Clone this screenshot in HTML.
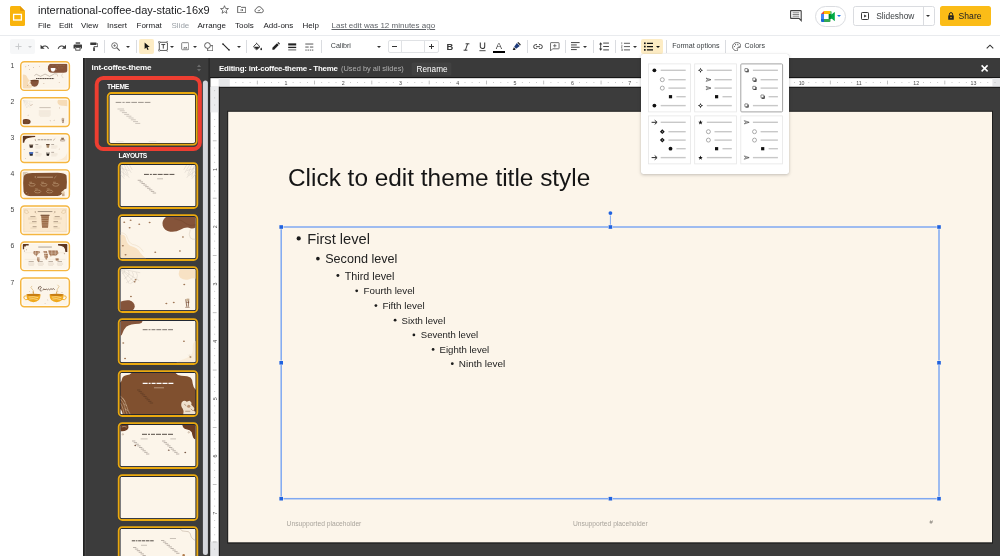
<!DOCTYPE html>
<html><head><meta charset="utf-8">
<style>
*{box-sizing:border-box;margin:0;padding:0}
html,body{width:1000px;height:556px;overflow:hidden;background:#fff;font-family:"Liberation Sans",sans-serif;}
.abs{position:absolute}
#root{position:relative;width:1000px;height:556px;overflow:hidden;background:#fff;-webkit-font-smoothing:antialiased}
.t,svg.ic{will-change:opacity}
.t{position:absolute;white-space:nowrap;line-height:1}
.menu{font-size:8px;color:#202124;top:22px}
.sep{position:absolute;top:40px;width:1px;height:13px;background:#dadce0}
.ic{position:absolute}
.caret{position:absolute;width:0;height:0;border-left:2.5px solid transparent;border-right:2.5px solid transparent;border-top:2.5px solid #333;top:46px}
.dark{background:#3c3c3c}
.fth{position:absolute;left:20px;width:49.8px;height:29.6px;border:1.6px solid #f3b337;border-radius:4px;background:#fffaf0;padding:.7px;overflow:hidden}
.fnum{position:absolute;left:9.3px;font-size:6.8px;color:#444;width:6px;text-align:center}
.lth{position:absolute;left:117.8px;width:80.4px;height:46.6px;border:1.8px solid #eaa90f;border-radius:4px;background:#2b2b2b;padding:.7px;overflow:hidden}
.lth>svg,.lth>div{display:block;width:100%;height:100%;border-radius:2px;background:#fcf5ea}
</style></head><body><div id="root">

<!-- ===== HEADER ===== -->
<svg class="abs" style="left:10px;top:6px" width="15" height="20" viewBox="0 0 15 20">
<path d="M1.5 0H10L15 5V18.5Q15 20 13.5 20H1.5Q0 20 0 18.5V1.5Q0 0 1.5 0Z" fill="#f9b40c"/>
<path d="M10 0L15 5H11.2Q10 5 10 3.8Z" fill="#e59a06"/>
<rect x="3.6" y="8.4" width="7.8" height="5.6" fill="none" stroke="#fff" stroke-width="1.3"/>
</svg>
<div class="t" id="doctitle" style="left:38px;top:5px;font-size:11px;color:#202124">international-coffee-day-static-16x9</div>
<div class="t menu" style="left:38px">File</div>
<div class="t menu" style="left:59px">Edit</div>
<div class="t menu" style="left:81px">View</div>
<div class="t menu" style="left:107px">Insert</div>
<div class="t menu" style="left:136.5px">Format</div>
<div class="t menu" style="left:171.5px;color:#9aa0a6">Slide</div>
<div class="t menu" style="left:197.5px">Arrange</div>
<div class="t menu" style="left:235px">Tools</div>
<div class="t menu" style="left:263.5px">Add-ons</div>
<div class="t menu" style="left:302.5px">Help</div>
<div class="t menu" style="left:331.5px;color:#5f6368;text-decoration:underline" id="lastedit">Last edit was 12 minutes ago</div>

<!-- star/move/cloud icons -->
<svg class="ic" style="left:219.9px;top:5.4px" width="9" height="9" viewBox="0 0 10 10"><path d="M5 0.8L6.2 3.8L9.4 4L6.9 6.1L7.7 9.2L5 7.5L2.3 9.2L3.1 6.1L0.6 4L3.8 3.8Z" fill="none" stroke="#444" stroke-width="0.8"/></svg>
<svg class="ic" style="left:236.8px;top:6.2px" width="9.4" height="7.2" viewBox="0 0 10 8"><path d="M0.5 0.5H3.6L4.6 1.5H9.5V7.5H0.5Z" fill="none" stroke="#444" stroke-width="0.9"/><path d="M3.4 4.5H6.2M5.2 3.3L6.4 4.5L5.2 5.7" stroke="#444" stroke-width="0.8" fill="none"/></svg>
<svg class="ic" style="left:254px;top:6.4px" width="10.2" height="7.2" viewBox="0 0 11 8"><path d="M2.8 7.4A2.3 2.3 0 0 1 2.6 2.9A3 3 0 0 1 8.4 2.9A2.3 2.3 0 0 1 8.4 7.4Z" fill="none" stroke="#444" stroke-width="0.9"/><path d="M4.2 4.6L5.2 5.6L7 3.9" stroke="#444" stroke-width="0.8" fill="none"/></svg>
<!-- comments icon -->
<svg class="ic" style="left:790px;top:10px" width="12.5" height="12" viewBox="0 0 12.5 12"><path d="M1.2 0.6H10.6Q11.2 0.6 11.2 1.2V10.6L9 8.4H1.2Q0.6 8.4 0.6 7.8V1.2Q0.6 0.6 1.2 0.6Z" fill="none" stroke="#444" stroke-width="1.1"/><path d="M2.6 2.8H9.2M2.6 4.5H9.2M2.6 6.2H9.2" stroke="#666" stroke-width="0.8"/></svg>
<!-- meet -->
<div class="abs" style="left:814.8px;top:5.5px;width:30.8px;height:21px;border:1px solid #dadce0;border-radius:10.5px"></div>
<svg class="ic" style="left:820.5px;top:10.5px" width="14" height="11" viewBox="0 0 14 11"><path d="M0 3L3 0V3Z" fill="#ea4335"/><rect x="3" y="0" width="6.5" height="3" fill="#fbbc04"/><rect x="0" y="3" width="3" height="5" fill="#4285f4"/><path d="M0 8H3V11H1Q0 11 0 10Z" fill="#1967d2"/><path d="M3 8H9.5V10Q9.5 11 8.5 11H3Z" fill="#34a853"/><path d="M9.5 0Q10.5 0 10.5 1V3.4L13.2 1.2Q13.8 0.8 13.8 1.6V9.4Q13.8 10.2 13.2 9.8L10.5 7.6V8H7.5V3H9.5Z" fill="#00ac47"/><path d="M7.5 3H9.5V5.5L10.5 4.6V6.4L9.5 5.5V8H7.5Z" fill="#00832d"/><rect x="3" y="3" width="4.5" height="5" fill="#fff"/></svg>
<div class="caret" style="left:837.2px;top:14.6px;border-top-color:#1a73e8;border-left-width:2.2px;border-right-width:2.2px;border-top-width:2.4px"></div>
<!-- slideshow -->
<div class="abs" style="left:853px;top:6px;width:81.6px;height:20.4px;border:1px solid #dadce0;border-radius:2.5px"></div>
<div class="abs" style="left:922.8px;top:6px;width:1px;height:20.4px;background:#dadce0"></div>
<svg class="ic" style="left:860.7px;top:12px" width="8" height="8" viewBox="0 0 8 8"><rect x="0.5" y="0.5" width="7" height="7" rx="0.8" fill="none" stroke="#222" stroke-width="0.9"/><path d="M3.2 2.4V5.6L5.6 4Z" fill="#222"/></svg>
<div class="t" id="sshow" style="left:876.2px;top:11.6px;font-size:8.4px;color:#3c4043">Slideshow</div>
<div class="caret" style="left:926.3px;top:15px;border-top-color:#333"></div>
<!-- share -->
<div class="abs" style="left:940px;top:6px;width:51.2px;height:20px;background:#fbbc17;border-radius:2.5px"></div>
<svg class="ic" style="left:947.8px;top:11.5px" width="6" height="8" viewBox="0 0 6 8"><rect x="0.2" y="3.2" width="5.6" height="4.6" rx="0.6" fill="#202124"/><path d="M1.4 3.4V2.2A1.6 1.6 0 0 1 4.6 2.2V3.4" fill="none" stroke="#202124" stroke-width="1"/><circle cx="3" cy="5.5" r="0.7" fill="#fbbc17"/></svg>
<div class="t" id="share" style="left:958.6px;top:11.6px;font-size:8.6px;color:#202124">Share</div>
<div class="abs" style="left:0;top:35px;width:1000px;height:1px;background:#e9ebee"></div>

<!-- ===== TOOLBAR placeholder ===== -->
<div id="toolbar">
<div class="abs" style="left:10px;top:39px;width:24.8px;height:14.8px;background:#f6f7f8;border-radius:2px"></div>
<svg class="ic" style="left:14.50px;top:43.00px" width="7" height="7" viewBox="0 0 8 8"><path d="M4 0.5V7.5M0.5 4H7.5" stroke="#c8cacc" stroke-width="1.1"/></svg>
<div class="abs" style="left:27.70px;top:45.55px;width:0;height:0;border-left:2.3px solid transparent;border-right:2.3px solid transparent;border-top:2.5px solid #c8cacc"></div>
<svg class="ic" style="left:40.20px;top:42.70px" width="9.6" height="7.6" viewBox="0 0 11 9"><path d="M2.6 4.8C4.6 2.6 8.4 3 9.9 6.8" fill="none" stroke="#3a3a3a" stroke-width="1.25"/><path d="M0.5 2V6.8H5.3Z" fill="#3a3a3a"/></svg>
<svg class="ic" style="left:56.80px;top:42.70px" width="9.6" height="7.6" viewBox="0 0 11 9"><path d="M8.4 4.8C6.4 2.6 2.6 3 1.1 6.8" fill="none" stroke="#3a3a3a" stroke-width="1.25"/><path d="M10.5 2V6.8H5.7Z" fill="#3a3a3a"/></svg>
<svg class="ic" style="left:72.70px;top:42.20px" width="9.8" height="8.6" viewBox="0 0 11 10"><rect x="2.9" y="0.4" width="5.2" height="1.6" fill="#3a3a3a"/><path d="M1.6 3H9.4Q10.6 3 10.6 4.2V7.6H8.7V5.9H2.3V7.6H0.4V4.2Q0.4 3 1.6 3Z" fill="#3a3a3a"/><rect x="3" y="6.5" width="5" height="3" fill="#fff" stroke="#3a3a3a" stroke-width="1"/></svg>
<svg class="ic" style="left:90.00px;top:41.70px" width="8.4" height="9.6" viewBox="0 0 10 11"><rect x="0.3" y="0.4" width="7.4" height="2.9" rx="0.4" fill="#3a3a3a"/><path d="M7.7 1.9H9.3V5.3H4.8V6.6" fill="none" stroke="#3a3a3a" stroke-width="1"/><rect x="3.8" y="6.4" width="2" height="4.2" fill="#3a3a3a"/></svg>
<div class="sep" style="left:103.8px"></div>
<svg class="ic" style="left:110.90px;top:42.00px" width="9.4" height="9.4" viewBox="0 0 11 11"><circle cx="4.2" cy="4.2" r="3.4" fill="none" stroke="#555" stroke-width="0.95"/><path d="M6.7 6.7L10.2 10.2" stroke="#555" stroke-width="1.25"/><path d="M4.2 2.6V5.8M2.6 4.2H5.8" stroke="#555" stroke-width="0.75"/></svg>
<div class="abs" style="left:126.20px;top:45.55px;width:0;height:0;border-left:2.3px solid transparent;border-right:2.3px solid transparent;border-top:2.5px solid #333"></div>
<div class="sep" style="left:136.3px"></div>
<div class="abs" style="left:139.3px;top:39.3px;width:15px;height:14.4px;background:#fdecc4;border-radius:2px"></div>
<svg class="ic" style="left:143.80px;top:42.30px" width="6.2" height="8.8" viewBox="0 0 8 11"><path d="M0.8 0.4V8.8L3 6.8L4.5 10.3L6 9.6L4.5 6.2H7.4Z" fill="#151515"/></svg>
<svg class="ic" style="left:157.50px;top:41.20px" width="10.6" height="10.6" viewBox="0 0 12 12"><rect x="1.4" y="1.4" width="9.2" height="9.2" fill="none" stroke="#3a3a3a" stroke-width="0.9"/><circle cx="1.4" cy="1.4" r="1" fill="#fff" stroke="#3a3a3a" stroke-width="0.6"/><circle cx="10.6" cy="1.4" r="1" fill="#fff" stroke="#3a3a3a" stroke-width="0.6"/><circle cx="1.4" cy="10.6" r="1" fill="#fff" stroke="#3a3a3a" stroke-width="0.6"/><circle cx="10.6" cy="10.6" r="1" fill="#fff" stroke="#3a3a3a" stroke-width="0.6"/><path d="M3.8 4H8.2M6 4V8.6" stroke="#3a3a3a" stroke-width="1.05" fill="none"/></svg>
<div class="abs" style="left:170.10px;top:45.55px;width:0;height:0;border-left:2.3px solid transparent;border-right:2.3px solid transparent;border-top:2.5px solid #333"></div>
<svg class="ic" style="left:180.70px;top:42.30px" width="8.4" height="8.4" viewBox="0 0 10 10"><rect x="0.8" y="0.8" width="8.4" height="8.4" rx="0.9" fill="none" stroke="#666" stroke-width="0.95"/><path d="M2.4 7.6L4 5.9L5.2 7L6.4 5.7L7.8 7.6Z" fill="#666"/></svg>
<div class="abs" style="left:192.50px;top:45.55px;width:0;height:0;border-left:2.3px solid transparent;border-right:2.3px solid transparent;border-top:2.5px solid #333"></div>
<svg class="ic" style="left:203.60px;top:41.70px" width="9.6" height="9.6" viewBox="0 0 11 11"><circle cx="4" cy="4" r="3.3" fill="none" stroke="#3a3a3a" stroke-width="0.95"/><path d="M7.6 4.2H10.2V10.2H4.2V7.6" fill="none" stroke="#3a3a3a" stroke-width="0.95"/></svg>
<svg class="ic" style="left:222.00px;top:42.50px" width="8" height="8" viewBox="0 0 9 9"><path d="M1 1L8 8" stroke="#222" stroke-width="1.15"/><circle cx="1" cy="1" r="0.85" fill="#222"/><circle cx="8" cy="8" r="0.85" fill="#222"/></svg>
<div class="abs" style="left:236.50px;top:45.55px;width:0;height:0;border-left:2.3px solid transparent;border-right:2.3px solid transparent;border-top:2.5px solid #333"></div>
<div class="sep" style="left:246.0px"></div>
<svg class="ic" style="left:252.60px;top:41.90px" width="9.6" height="8.8" viewBox="0 0 11 10"><path d="M3.4 0.8L8 5.4L4.7 8.5Q4.1 9 3.5 8.5L1 6Q0.5 5.4 1 4.8L4.2 1.6" fill="none" stroke="#222" stroke-width="0.95"/><path d="M1.2 5.4H7.8L4.4 8.6Z" fill="#222"/><path d="M9.4 6.2Q10.6 7.8 10.4 8.4A1 1 0 0 1 8.4 8.4Q8.2 7.8 9.4 6.2Z" fill="#222"/></svg>
<svg class="ic" style="left:271.60px;top:42.20px" width="8" height="8" viewBox="0 0 9 9"><path d="M0.4 8.6V6.6L5.6 1.4L7.6 3.4L2.4 8.6Z" fill="#222"/><path d="M6.2 0.8L6.8 0.2Q7.1 0 7.4 0.2L8.8 1.6Q9 1.9 8.8 2.2L8.2 2.8Z" fill="#222"/></svg>
<svg class="ic" style="left:288.20px;top:42.50px" width="8.4" height="8" viewBox="0 0 9 9"><rect x="0" y="0.4" width="9" height="2.4" fill="#222"/><rect x="0" y="4.2" width="9" height="1.5" fill="#222"/><rect x="0" y="7.4" width="9" height="0.8" fill="#222"/></svg>
<svg class="ic" style="left:305.20px;top:42.50px" width="8.6" height="8" viewBox="0 0 9 9"><rect x="0" y="0.6" width="9" height="1.1" fill="#555"/><rect x="0" y="4" width="3.8" height="1.1" fill="#555"/><rect x="5.2" y="4" width="3.8" height="1.1" fill="#555"/><rect x="0" y="7.4" width="1.6" height="1.1" fill="#555"/><rect x="2.5" y="7.4" width="1.6" height="1.1" fill="#555"/><rect x="5" y="7.4" width="1.6" height="1.1" fill="#555"/><rect x="7.4" y="7.4" width="1.6" height="1.1" fill="#555"/></svg>
<div class="sep" style="left:321.0px"></div>
<div class="t" id="calibri" style="left:330.8px;top:43.2px;font-size:7.1px;color:#3c4043">Calibri</div>
<div class="abs" style="left:377.00px;top:45.55px;width:0;height:0;border-left:2.3px solid transparent;border-right:2.3px solid transparent;border-top:2.5px solid #333"></div>
<div class="abs" style="left:387.6px;top:39.6px;width:51.2px;height:13.8px;border:1px solid #e0e2e5;border-radius:2px"></div>
<div class="abs" style="left:401.2px;top:39.6px;width:1px;height:13.8px;background:#e0e2e5"></div>
<div class="abs" style="left:424.4px;top:39.6px;width:1px;height:13.8px;background:#e0e2e5"></div>
<div class="abs" style="left:392.4px;top:46.1px;width:4.8px;height:1px;background:#333"></div>
<div class="abs" style="left:429.1px;top:46.1px;width:5px;height:1px;background:#333"></div>
<div class="abs" style="left:431.1px;top:44.1px;width:1px;height:5px;background:#333"></div>
<div class="t" style="left:446.4px;top:42px;font-size:9.4px;font-weight:bold;color:#3a3a3a">B</div>
<svg class="ic" style="left:462.50px;top:42.50px" width="7" height="8" viewBox="0 0 7 8"><path d="M2.6 0.8H6.4M0.6 7.2H4.4M4.6 0.8L2.4 7.2" stroke="#3a3a3a" stroke-width="1" fill="none"/></svg>
<svg class="ic" style="left:478.80px;top:42.30px" width="7" height="9.4" viewBox="0 0 7 9.4"><path d="M1.3 0.4V4.4A2.2 2.2 0 0 0 5.7 4.4V0.4" stroke="#3a3a3a" stroke-width="1.05" fill="none"/><path d="M0.4 8.7H6.6" stroke="#3a3a3a" stroke-width="0.9"/></svg>
<div class="t" style="left:495.8px;top:41.2px;font-size:9.4px;color:#3a3a3a">A</div>
<div class="abs" style="left:493px;top:51.2px;width:12px;height:1.7px;background:#000"></div>
<svg class="ic" style="left:512.10px;top:41.60px" width="9" height="9" viewBox="0 0 10 10"><path d="M5.4 1.2L8.6 4.4L4.6 7.6L2.4 5.4Z" fill="#1c3a7a"/><path d="M2 5.8L4.2 8L3.2 8.8H0.8Z" fill="#222"/><path d="M6 0.8L7 0L9.8 2.8L9 3.8Z" fill="#222"/></svg>
<div class="sep" style="left:527.1px"></div>
<svg class="ic" style="left:533.00px;top:43.80px" width="10" height="5.4" viewBox="0 0 11 6"><path d="M4.4 0.7H3A2.3 2.3 0 0 0 3 5.3H4.4M6.6 0.7H8A2.3 2.3 0 0 1 8 5.3H6.6M3.4 3H7.6" fill="none" stroke="#3a3a3a" stroke-width="1.1"/></svg>
<svg class="ic" style="left:550.00px;top:42.00px" width="9.6" height="9.6" viewBox="0 0 11 11"><path d="M1.2 0.7H9.8Q10.4 0.7 10.4 1.3V7.2Q10.4 7.8 9.8 7.8H3L0.6 10.2V1.3Q0.6 0.7 1.2 0.7Z" fill="none" stroke="#555" stroke-width="0.95"/><path d="M5.5 2.4V6.2M3.6 4.3H7.4" stroke="#555" stroke-width="0.95"/></svg>
<div class="sep" style="left:564.9px"></div>
<svg class="ic" style="left:570.80px;top:42.40px" width="9" height="8.2" viewBox="0 0 10 9"><path d="M0 0.6H9.6M0 3.2H6.4M0 5.8H9.6M0 8.4H6.4" stroke="#3a3a3a" stroke-width="1.05"/></svg>
<div class="abs" style="left:582.90px;top:45.55px;width:0;height:0;border-left:2.3px solid transparent;border-right:2.3px solid transparent;border-top:2.5px solid #333"></div>
<div class="sep" style="left:592.7px"></div>
<svg class="ic" style="left:599.40px;top:42.00px" width="10" height="9" viewBox="0 0 11 10"><path d="M4.6 1.2H11M4.6 5H11M4.6 8.8H11" stroke="#3a3a3a" stroke-width="1.05"/><path d="M1.8 1.6V8.4" stroke="#3a3a3a" stroke-width="1"/><path d="M0 2.8L1.8 0.4L3.6 2.8ZM0 7.2L1.8 9.6L3.6 7.2Z" fill="#3a3a3a"/></svg>
<div class="sep" style="left:615.1px"></div>
<svg class="ic" style="left:620.90px;top:41.90px" width="9.2" height="9.2" viewBox="0 0 10 10"><path d="M3.2 1.4H10M3.2 5H10M3.2 8.6H10" stroke="#555" stroke-width="1.05"/><path d="M0.8 0.2V2.6M0.2 4H1.4L0.2 6H1.4M0.2 7.4H1.4V9.8H0.2M0.6 8.6H1.4" stroke="#555" stroke-width="0.6" fill="none"/></svg>
<div class="abs" style="left:633.30px;top:45.55px;width:0;height:0;border-left:2.3px solid transparent;border-right:2.3px solid transparent;border-top:2.5px solid #333"></div>
<div class="abs" style="left:641.2px;top:38.8px;width:22.2px;height:15px;background:#fdecc4;border-radius:2px"></div>
<svg class="ic" style="left:644.00px;top:41.90px" width="9.2" height="9.2" viewBox="0 0 10 10"><path d="M3.2 1.4H10M3.2 5H10M3.2 8.6H10" stroke="#111" stroke-width="1.3"/><rect x="0" y="0.5" width="1.8" height="1.8" fill="#111"/><rect x="0" y="4.1" width="1.8" height="1.8" fill="#111"/><rect x="0" y="7.7" width="1.8" height="1.8" fill="#111"/></svg>
<div class="abs" style="left:656.20px;top:45.55px;width:0;height:0;border-left:2.3px solid transparent;border-right:2.3px solid transparent;border-top:2.5px solid #111"></div>
<div class="sep" style="left:665.5px"></div>
<div class="t" id="fmtopt" style="left:672.2px;top:43.4px;font-size:7.1px;color:#3c4043">Format options</div>
<div class="sep" style="left:725.1px"></div>
<svg class="ic" style="left:731.80px;top:41.80px" width="9.4" height="9.4" viewBox="0 0 10 10"><path d="M5 0.6A4.4 4.4 0 1 0 5 9.4Q6 9.4 6 8.5Q6 8 5.7 7.7Q5.4 7.3 5.4 6.9Q5.4 6 6.4 6H7.6Q9.4 6 9.4 4.4Q9.4 0.6 5 0.6Z" fill="none" stroke="#555" stroke-width="0.9"/><circle cx="2.6" cy="4.8" r="0.6" fill="#555"/><circle cx="3.8" cy="2.8" r="0.6" fill="#555"/><circle cx="6.2" cy="2.8" r="0.6" fill="#555"/><circle cx="7.6" cy="4.6" r="0.6" fill="#555"/></svg>
<div class="t" id="colors" style="left:744.5px;top:43.4px;font-size:7.1px;color:#3c4043">Colors</div>
<svg class="ic" style="left:986.00px;top:44.10px" width="8" height="5.4" viewBox="0 0 9 6"><path d="M0.8 5L4.5 1.3L8.2 5" fill="none" stroke="#333" stroke-width="1.2"/></svg>
</div>


<!-- ===== FILMSTRIP ===== -->
<div id="film">
<div class="fnum t" style="top:63.2px">1</div>
<div class="fnum t" style="top:99.2px">2</div>
<div class="fnum t" style="top:135.3px">3</div>
<div class="fnum t" style="top:171.3px">4</div>
<div class="fnum t" style="top:207.4px">5</div>
<div class="fnum t" style="top:243.4px">6</div>
<div class="fnum t" style="top:279.5px">7</div>
<svg class="ic" style="left:0;top:0" width="90" height="556" viewBox="0 0 90 556"><defs><clipPath id="fc0"><rect x="22.45" y="63.45" width="45.20" height="25.20" rx="1.6"/></clipPath><clipPath id="fc1"><rect x="22.45" y="99.50" width="45.20" height="25.20" rx="1.6"/></clipPath><clipPath id="fc2"><rect x="22.45" y="135.55" width="45.20" height="25.20" rx="1.6"/></clipPath><clipPath id="fc3"><rect x="22.45" y="171.60" width="45.20" height="25.20" rx="1.6"/></clipPath><clipPath id="fc4"><rect x="22.45" y="207.65" width="45.20" height="25.20" rx="1.6"/></clipPath><clipPath id="fc5"><rect x="22.45" y="243.70" width="45.20" height="25.20" rx="1.6"/></clipPath><clipPath id="fc6"><rect x="22.45" y="279.75" width="45.20" height="25.20" rx="1.6"/></clipPath></defs><rect x="20.73" y="61.73" width="48.65" height="28.65" rx="3.6" fill="#fffaf2" stroke="#f5b640" stroke-width="1.45"/><g clip-path="url(#fc0)"><svg x="22.45" y="63.45" width="45.20" height="25.20" viewBox="0 0 160 90" preserveAspectRatio="none"><rect width="160" height="90" fill="#fcf5ea"/>
<path d="M0 40Q14 38 18 52Q22 62 34 66Q40 80 28 90H0Z" fill="#f6dcb8"/>
<path d="M98 0H160V24Q158 33 146 33H106Q90 33 90 18Q90 6 98 0Z" fill="#85533a"/>
<path d="M100 16H116Q116 29 108 29Q100 29 100 16Z" fill="#fff"/><path d="M116 18Q121 18 118 24" stroke="#fff" fill="none" stroke-width="1.5"/>
<path d="M106 8H112M118 8H150M126 16H148" stroke="#b8905c" stroke-width="1.3" stroke-dasharray="3 2"/>
<path d="M28 61H58Q58 83 43 83Q28 83 28 61Z" fill="#85533a"/><path d="M29 65Q19 63 22 72Q25 78 32 76" fill="none" stroke="#fff" stroke-width="2.5"/><ellipse cx="43" cy="61" rx="15" ry="2.6" fill="#6e422a"/>
<path d="M42 44Q48 34 56 42T72 42T88 42T104 42T124 38" stroke="#8a7a6c" stroke-width="1.5" fill="none"/>
<path d="M48 54H112" stroke="#2a1c14" stroke-width="3" stroke-dasharray="5 1.2"/>
<path d="M142 36Q134 44 144 52" stroke="#c9b9a4" stroke-width="1.5" fill="none"/>
<circle cx="12" cy="12" r="1.3" fill="#8a5a3a"/><circle cx="24" cy="22" r="1.3" fill="#8a5a3a"/><circle cx="40" cy="14" r="1.3" fill="#8a5a3a"/><circle cx="60" cy="10" r="1.3" fill="#8a5a3a"/><circle cx="22" cy="8" r="1.3" fill="#8a5a3a"/><circle cx="124" cy="44" r="1.3" fill="#8a5a3a"/><circle cx="130" cy="68" r="1.3" fill="#8a5a3a"/><circle cx="76" cy="72" r="1.3" fill="#8a5a3a"/><circle cx="18" cy="78" r="1.3" fill="#8a5a3a"/></svg></g><rect x="20.73" y="97.77" width="48.65" height="28.65" rx="3.6" fill="#fffaf2" stroke="#f5b640" stroke-width="1.45"/><g clip-path="url(#fc1)"><svg x="22.45" y="99.50" width="45.20" height="25.20" viewBox="0 0 160 90" preserveAspectRatio="none"><rect width="160" height="90" fill="#fcf5ea"/>
<g stroke="#d2cbc2" stroke-width=".8" fill="none"><path d="M2 2L34 22M2 2L16 30M2 2L36 8M2 2L28 30M8 3Q12 8 4 12M16 5Q22 14 8 22M24 7Q32 20 12 30"/></g>
<path d="M126 0Q122 8 126 16Q132 24 144 22Q154 22 160 24V0Z" fill="#f6dcb8"/>
<path d="M0 74Q4 69 14 70Q28 70 29 79Q29 88 20 88H6Q0 88 0 82Z" fill="#6e4028"/><path d="M6 76H22M5 80H24M7 84H21" stroke="#9a6a48" stroke-width="1"/>
<path d="M60 29H100" stroke="#8a7a6e" stroke-width="1.5"/>
<path d="M58 40H100M58 44H100M58 48H100M58 52H100M58 56H100M62 60H96" stroke="#e2d6c6" stroke-width="1.5"/>
<path d="M140 68L142 84M146 67L145 84M140 74H147" stroke="#6a3c22" stroke-width="1.6" fill="none"/><circle cx="143" cy="68" r="3" fill="#c9b090"/>
<circle cx="30" cy="22" r="1.3" fill="#8a5a3a"/><circle cx="34" cy="18" r="1.3" fill="#8a5a3a"/><circle cx="132" cy="30" r="1.3" fill="#8a5a3a"/><circle cx="112" cy="74" r="1.3" fill="#8a5a3a"/><circle cx="98" cy="76" r="1.3" fill="#8a5a3a"/><circle cx="20" cy="56" r="1.3" fill="#8a5a3a"/></svg></g><rect x="20.73" y="133.82" width="48.65" height="28.65" rx="3.6" fill="#fffaf2" stroke="#f5b640" stroke-width="1.45"/><g clip-path="url(#fc2)"><svg x="22.45" y="135.55" width="45.20" height="25.20" viewBox="0 0 160 90" preserveAspectRatio="none"><rect width="160" height="90" fill="#fcf5ea"/>
<path d="M0 0H45V5Q22 6 12 12Q7 18 6 26H0Z" fill="#5e3620"/>
<path d="M160 56V90H118Q142 86 152 74Q158 64 160 56Z" fill="#fae8cf"/>
<path d="M54 15H104" stroke="#4a3a30" stroke-width="1.8" stroke-dasharray="9 2"/><path d="M46 12Q42 16 48 20" stroke="#6a4a30" stroke-width="1.4" fill="none"/><path d="M108 18L116 11" stroke="#6a4a30" stroke-width="1.2"/>
<ellipse cx="142" cy="17" rx="9" ry="2.6" fill="none" stroke="#5e3620" stroke-width="1.4"/><path d="M137 8H147L146 15H138Z" fill="#8a6a4e"/>
<path d="M24 32H38L36 44H26Z" fill="#3a2a22"/><path d="M24 32H38L37.5 35H24.5Z" fill="#d8c8b4"/>
<path d="M84 30H96L94 44H86Z" fill="#a88a6a"/><path d="M84 30H96L95.5 34H84.5Z" fill="#5a4030"/>
<path d="M24 60H38L36 72H26Z" fill="#2a2a30"/><path d="M24 60H38L37.4 65H24.6Z" fill="#4a7ae0"/>
<path d="M84 60H96L94 72H86Z" fill="#1a1410"/><path d="M84 60H96L95.5 64H84.5Z" fill="#f4ece0"/>
<path d="M46 32H56M102 32H112M46 60H56M102 60H112" stroke="#5a4a40" stroke-width="1.5"/>
<path d="M46 37H68M46 41H68M46 45H64M102 37H124M102 41H124M102 45H120M46 65H68M46 69H68M46 73H64M102 65H124M102 69H124M102 73H120" stroke="#e0d4c2" stroke-width="1.3"/>
<circle cx="6" cy="50" r="1.3" fill="#8a5a3a"/><circle cx="130" cy="48" r="1.3" fill="#8a5a3a"/><circle cx="10" cy="82" r="1.3" fill="#8a5a3a"/></svg></g><rect x="20.73" y="169.87" width="48.65" height="28.65" rx="3.6" fill="#fffaf2" stroke="#f5b640" stroke-width="1.45"/><g clip-path="url(#fc3)"><svg x="22.45" y="171.60" width="45.20" height="25.20" viewBox="0 0 160 90" preserveAspectRatio="none"><rect width="160" height="90" fill="#fcf5ea"/>
<path d="M4 12Q16 4 40 5L124 4Q150 4 156 14Q159 40 156 60Q146 62 142 72Q140 86 124 87L28 88Q8 87 4 72Q1 40 4 12Z" fill="#80502f"/>
<path d="M0 0H24Q14 4 8 12Q4 18 0 20Z" fill="#d9c9b4"/>
<path d="M52 20H108" stroke="#f1dcc0" stroke-width="2"/><path d="M46 16Q42 20 48 24" stroke="#f1dcc0" stroke-width="1.4" fill="none"/><path d="M112 24L120 16" stroke="#f1dcc0" stroke-width="1.2"/>
<g stroke="#e8cfa8" fill="none" stroke-width="1.3"><path d="M24 38H34M66 38H76M108 38H118M44 62H54M86 62H96"/><ellipse cx="34" cy="47" rx="11" ry="5"/><ellipse cx="76" cy="47" rx="11" ry="5"/><ellipse cx="118" cy="47" rx="11" ry="5"/><ellipse cx="54" cy="71" rx="11" ry="5"/><ellipse cx="96" cy="71" rx="11" ry="5"/></g>
<circle cx="144" cy="74" r="6" fill="#e9d4b8"/><rect x="140" y="78" width="9" height="10" fill="#c9a888"/>
<circle cx="14" cy="74" r="1.3" fill="#e8cfa8"/><circle cx="20" cy="80" r="1.3" fill="#e8cfa8"/></svg></g><rect x="20.73" y="205.92" width="48.65" height="28.65" rx="3.6" fill="#fffaf2" stroke="#f5b640" stroke-width="1.45"/><g clip-path="url(#fc4)"><svg x="22.45" y="207.65" width="45.20" height="25.20" viewBox="0 0 160 90" preserveAspectRatio="none"><rect width="160" height="90" fill="#fbe9cf"/>
<rect x="5" y="5" width="150" height="80" fill="none" stroke="#d9b98c" stroke-width="1" stroke-dasharray="2 2"/>
<path d="M8 8Q20 6 22 18Q14 24 8 18Z" fill="none" stroke="#c9a878" stroke-width="1.2"/><path d="M152 8Q140 6 138 18Q146 24 152 18Z" fill="none" stroke="#c9a878" stroke-width="1.2"/>
<path d="M54 14H106" stroke="#4a3a30" stroke-width="1.8"/><path d="M46 12Q42 16 48 20M114 12Q118 16 112 20" stroke="#6a4a30" stroke-width="1.4" fill="none"/>
<path d="M66 28H94L90.5 73H69.5Z" fill="#9a6a48"/><path d="M66 30H94M67 38H93M68 46H92M68 54H92M69 62H91M70 70H90" stroke="#f1dcc0" stroke-width="2.2" stroke-dasharray="2 1.6"/><rect x="64" y="25" width="32" height="4" rx="1" fill="#6a4028"/>
<path d="M28 32H46M114 32H132M34 50H50M110 50H126M36 68H50M110 68H124" stroke="#5a4030" stroke-width="1.6"/>
<path d="M20 37H50M20 41H50M110 37H140M110 41H140M24 55H50M110 55H136M28 73H50M110 73H132" stroke="#cdb594" stroke-width="1.2"/></svg></g><rect x="20.73" y="241.97" width="48.65" height="28.65" rx="3.6" fill="#fffaf2" stroke="#f5b640" stroke-width="1.45"/><g clip-path="url(#fc5)"><svg x="22.45" y="243.70" width="45.20" height="25.20" viewBox="0 0 160 90" preserveAspectRatio="none"><rect width="160" height="90" fill="#fcf5ea"/>
<path d="M0 0H22V6H12V10H6V20H0Z" fill="#5e3620"/><path d="M160 0H126V6Q140 6 146 12Q152 18 152 30H160Z" fill="#5e3620"/>
<circle cx="8" cy="26" r="1.5" fill="#7b4a2c"/><circle cx="14" cy="22" r="1.5" fill="#7b4a2c"/><circle cx="148" cy="36" r="1.5" fill="#7b4a2c"/>
<path d="M56 12H104" stroke="#4a3a30" stroke-width="1.6"/>
<path d="M8 32H152M8 56H152" stroke="#e4d6c2" stroke-width="1"/>
<g fill="#9a6844"><path d="M40 26H60L62 32L54 38L50 46L44 40L38 34Z"/><path d="M52 48H60L60 60L56 66L52 58Z"/><path d="M74 26H86L88 34H76Z"/><path d="M76 36H90L90 48L84 58L78 48Z"/><path d="M90 24H124L128 34L118 44L108 42L100 46L94 36Z"/><path d="M116 52H128V60H118Z"/></g>
<g stroke="#fcf5ea" stroke-width="1.3"><path d="M36 30H130M36 36H130M36 42H130M36 48H130M36 54H130"/><path d="M46 22V66M56 22V66M66 22V66M80 22V66M92 22V66M104 22V66M116 22V66"/></g>
<path d="M22 64H40M56 64H72M92 64H108M124 64H140" stroke="#5a4030" stroke-width="1.5"/>
<path d="M20 70H42M20 74H42M22 78H40M54 70H76M54 74H76M56 78H72M90 70H112M90 74H112M92 78H108M122 70H144M122 74H144M124 78H140" stroke="#d4c6b4" stroke-width="1.2"/></svg></g><rect x="20.73" y="278.02" width="48.65" height="28.65" rx="3.6" fill="#fffaf2" stroke="#f5b640" stroke-width="1.45"/><g clip-path="url(#fc6)"><svg x="22.45" y="279.75" width="45.20" height="25.20" viewBox="0 0 160 90" preserveAspectRatio="none"><rect width="160" height="90" fill="#fcf5ea"/>
<path d="M56 34Q54 24 64 24Q70 26 64 32Q58 40 68 40M72 38Q74 28 80 36Q84 30 88 36Q92 30 96 36Q100 30 106 34Q110 28 114 36" stroke="#4a2e1e" stroke-width="2.4" fill="none"/>
<path d="M34 22Q26 28 34 33Q42 38 36 46" stroke="#c9963c" stroke-width="1.6" fill="none"/><path d="M124 18Q134 24 126 30Q118 36 126 44" stroke="#c9963c" stroke-width="1.6" fill="none"/>
<path d="M14 54H64Q64 80 39 80Q14 80 14 54Z" fill="#f0a91e"/><ellipse cx="39" cy="54" rx="25" ry="4" fill="#c77d12"/><path d="M14 58Q2 56 6 67Q10 74 20 70" fill="none" stroke="#f0a91e" stroke-width="3.2"/><path d="M22 62Q38 58 56 64M24 69Q38 65 54 71" stroke="#fff2d0" stroke-width="2" fill="none"/>
<path d="M96 54H146Q146 80 121 80Q96 80 96 54Z" fill="#f0a91e"/><ellipse cx="121" cy="54" rx="25" ry="4" fill="#c77d12"/><path d="M146 58Q158 56 154 67Q150 74 140 70" fill="none" stroke="#f0a91e" stroke-width="3.2"/><path d="M104 62Q120 58 138 64M106 69Q120 65 136 71" stroke="#fff2d0" stroke-width="2" fill="none"/>
<path d="M39 42V50M121 42V50" stroke="#c77d12" stroke-width="2.4"/>
<circle cx="80" cy="84" r="1.1" fill="#8a5a3a"/><circle cx="90" cy="72" r="1.1" fill="#8a5a3a"/><circle cx="24" cy="42" r="1.1" fill="#8a5a3a"/><circle cx="140" cy="46" r="1.1" fill="#8a5a3a"/></svg></g></svg>
</div>

<!-- ===== THEME PANEL ===== -->
<div class="abs dark" style="left:83px;top:58px;width:127px;height:498px"></div>
<div id="panel">
<div class="t" id="ptitle" style="left:91.6px;top:63.6px;font-size:8.1px;font-weight:bold;color:#fff;letter-spacing:-0.2px">int-coffee-theme</div>
<div class="t" id="thm" style="left:107px;top:83.5px;font-size:6.7px;font-weight:bold;color:#fff;letter-spacing:-0.3px">THEME</div>
<div class="t" id="lay" style="left:118.6px;top:152.9px;font-size:6.7px;font-weight:bold;color:#fff;letter-spacing:-0.45px">LAYOUTS</div>
<svg class="ic" style="left:83px;top:58px" width="127" height="498" viewBox="83 58 127 498"><rect x="83.2" y="58" width="1.5" height="498" fill="#1c1c1c"/><rect x="84.7" y="58" width="1.3" height="498" fill="#464646"/><path d="M197 67L199 64.4L201 67ZM197 69L199 71.6L201 69Z" fill="#6c6c6c"/><rect x="96.7" y="78" width="103.2" height="71" rx="6.6" fill="none" stroke="#ee3e31" stroke-width="3.9"/><defs><clipPath id="pc0"><rect x="109.25" y="94.55" width="85.90" height="48.50" rx="1.8"/></clipPath><clipPath id="pc1"><rect x="120.25" y="164.75" width="75.50" height="41.70" rx="1.8"/></clipPath><clipPath id="pc2"><rect x="120.25" y="216.75" width="75.50" height="41.70" rx="1.8"/></clipPath><clipPath id="pc3"><rect x="120.25" y="268.75" width="75.50" height="41.70" rx="1.8"/></clipPath><clipPath id="pc4"><rect x="120.25" y="320.75" width="75.50" height="41.70" rx="1.8"/></clipPath><clipPath id="pc5"><rect x="120.25" y="372.75" width="75.50" height="41.70" rx="1.8"/></clipPath><clipPath id="pc6"><rect x="120.25" y="424.75" width="75.50" height="41.70" rx="1.8"/></clipPath><clipPath id="pc7"><rect x="120.25" y="476.75" width="75.50" height="41.70" rx="1.8"/></clipPath><clipPath id="pc8"><rect x="120.25" y="528.75" width="75.50" height="41.70" rx="1.8"/></clipPath></defs><rect x="107.70" y="93.00" width="89.00" height="51.60" rx="3.6" fill="#1e2430" stroke="#eaa90f" stroke-width="1.8"/><g clip-path="url(#pc0)"><svg x="109.25" y="94.55" width="85.90" height="48.50" viewBox="0 0 85.9 48.5" preserveAspectRatio="none"><rect width="85.9" height="48.5" fill="#fcf5ea"/><path d="M6.45 7.85h5.60M13.17 7.85h2.24M16.52 7.85h4.48M22.12 7.85h5.60M28.84 7.85h5.60M35.55 7.85h5.60" stroke="#7a726c" stroke-width="0.75"/><path d="M8.25 14.45h6.6M10.47 16.25h5.0M12.69 18.05h5.0M14.91 19.85h5.0M17.13 21.65h5.0M19.35 23.45h5.0M21.57 25.25h5.0M23.79 27.05h5.0M26.01 28.85h5.0" stroke="#a09890" stroke-width="0.5"/><path d="M6.85 46.9h7.6M39.4 46.9h7.8" stroke="#dcd4c8" stroke-width=".45"/></svg></g><rect x="118.70" y="163.20" width="78.60" height="44.80" rx="3.6" fill="#1e2430" stroke="#eaa90f" stroke-width="1.8"/><g clip-path="url(#pc1)"><svg x="120.25" y="164.75" width="75.50" height="41.70" viewBox="0 0 75.5 41.7" preserveAspectRatio="none"><rect width="75.5" height="41.7" fill="#fcf5ea"/>
<g stroke="#d4cec6" stroke-width=".45" fill="none"><path d="M0 0L9 13M1.5 0L4 12M4 0L8 10M0 3L9 6M0 6L7 11M6 0L11 8M0 9L4 14M9 0L12 5"/><path d="M75.5 0L66.5 13M74 0L71.5 12M71.5 0L67.5 10M75.5 3L66.5 6M75.5 6L68.5 11M69.5 0L64.5 8M75.5 9L71.5 14M66.5 0L63.5 5"/></g>
<path d="M23.75 9.65h4.90M29.63 9.65h1.96M32.58 9.65h3.92M37.48 9.65h4.90M43.36 9.65h4.90M49.25 9.65h4.90" stroke="#4e4640" stroke-width="0.95"/>
<path d="M36.85 14.05h5.9" stroke="#a09890" stroke-width=".6"/>
<path d="M17.45 15.55h3.4M19.32 17.14h3.4M21.20 18.73h3.4M23.07 20.32h3.4M24.95 21.91h3.4M26.82 23.50h3.4M28.70 25.09h3.4M30.57 26.68h3.4M32.45 28.27h3.4" stroke="#9a9088" stroke-width="0.65"/></svg></g><rect x="118.70" y="215.20" width="78.60" height="44.80" rx="3.6" fill="#1e2430" stroke="#eaa90f" stroke-width="1.8"/><g clip-path="url(#pc2)"><svg x="120.25" y="216.75" width="75.50" height="41.70" viewBox="0 0 75.5 41.7" preserveAspectRatio="none"><rect width="75.5" height="41.7" fill="#fcf5ea"/>
<path d="M46 0Q41 4 42.5 9Q44 14 50 15Q56 15.6 60 13Q66 9.6 70 11.4Q73 12.4 75.5 10.4V0Z" fill="#85543a"/>
<path d="M54 2Q62 3 66 7Q70 10 75.5 8" stroke="#6e4129" stroke-width=".4" fill="none"/>
<path d="M70 13Q68 18 70 21Q72 23 75.5 22.5" stroke="#cbbfae" stroke-width=".4" fill="none"/>
<path d="M0 18Q4 17 5.5 21Q6.5 27 10 29Q18 31 20 36Q23 40 26 41.7H0Z" fill="#f8e2c4"/>
<path d="M0 16Q6 16 7 21Q8 26 12 27.5Q20 29 23 35" stroke="#e6d2b4" stroke-width=".4" fill="none"/>
<ellipse cx="4" cy="5.5" rx="1.01" ry="0.75" fill="#a07858"/><ellipse cx="10.4" cy="3.5" rx="1.01" ry="0.75" fill="#a07858"/><ellipse cx="19" cy="7.5" rx="1.01" ry="0.75" fill="#a07858"/><ellipse cx="9.4" cy="11" rx="1.01" ry="0.75" fill="#a07858"/><ellipse cx="29.4" cy="5.7" rx="1.01" ry="0.75" fill="#a07858"/><ellipse cx="62.7" cy="20.3" rx="1.01" ry="0.75" fill="#a07858"/><ellipse cx="35" cy="35.6" rx="1.01" ry="0.75" fill="#a07858"/><ellipse cx="59.7" cy="34.3" rx="1.01" ry="0.75" fill="#a07858"/><ellipse cx="5.3" cy="38" rx="1.01" ry="0.75" fill="#a07858"/><ellipse cx="2.6" cy="29" rx="1.01" ry="0.75" fill="#a07858"/></svg></g><rect x="118.70" y="267.20" width="78.60" height="44.80" rx="3.6" fill="#1e2430" stroke="#eaa90f" stroke-width="1.8"/><g clip-path="url(#pc3)"><svg x="120.25" y="268.75" width="75.50" height="41.70" viewBox="0 0 75.5 41.7" preserveAspectRatio="none"><rect width="75.5" height="41.7" fill="#fcf5ea"/>
<g stroke="#cfc8be" stroke-width=".4" fill="none"><path d="M0 0L19 12M0 0L9 15M0 0L20 4M0 0L15 14M4 1Q6 3 2 5M8 2Q11 6 4 10M12 3Q16 9 6 14M16 3.5Q20 10 10 15"/></g>
<path d="M60 0Q57 5 60 9Q64 12 69 10.5Q73 9 75.5 10V0Z" fill="#f8e2c4"/>
<path d="M0 33Q4 31 9 31.5Q14.5 33 14.5 38Q14 41 12 41.7H0Z" fill="#85543a"/>
<path d="M65.5 30.5L66.5 38M68.5 30L68 38M66 33.5H69" stroke="#6a3c22" stroke-width=".7" fill="none"/><circle cx="67.2" cy="31" r="1.3" fill="#c9b090"/><path d="M65 38.6h4.4" stroke="#6a3c22" stroke-width=".5"/>
<ellipse cx="15.4" cy="11" rx="1.01" ry="0.75" fill="#a07858"/><ellipse cx="14.4" cy="13" rx="1.01" ry="0.75" fill="#a07858"/><ellipse cx="10.7" cy="27.8" rx="1.01" ry="0.75" fill="#a07858"/><ellipse cx="64" cy="15.8" rx="1.01" ry="0.75" fill="#a07858"/><ellipse cx="46.1" cy="34.8" rx="1.01" ry="0.75" fill="#a07858"/><ellipse cx="53.5" cy="33.8" rx="1.01" ry="0.75" fill="#a07858"/></svg></g><rect x="118.70" y="319.20" width="78.60" height="44.80" rx="3.6" fill="#1e2430" stroke="#eaa90f" stroke-width="1.8"/><g clip-path="url(#pc4)"><svg x="120.25" y="320.75" width="75.50" height="41.70" viewBox="0 0 75.5 41.7" preserveAspectRatio="none"><rect width="75.5" height="41.7" fill="#fcf5ea"/>
<path d="M0 0H22.5Q22 2.6 19 2.9Q10 3 6 6Q3 9 1.6 14L0 15.5Z" fill="#85543a"/>
<path d="M75.5 20Q72 22 72.5 27Q73 32 70 35Q66 38 62 39Q58 40 56 41.7H75.5Z" fill="#faecd8"/>
<path d="M22.45 8.95h4.89M28.31 8.95h1.95M31.25 8.95h3.91M36.13 8.95h4.89M42.00 8.95h4.89M47.86 8.95h4.89" stroke="#5a524c" stroke-width="0.8"/>
<path d="M68 34L71 37M69.5 33.5L70 37.5" stroke="#d9cdbc" stroke-width=".4"/>
<ellipse cx="3" cy="22.2" rx="1.01" ry="0.75" fill="#a07858"/><ellipse cx="63.7" cy="20.6" rx="1.01" ry="0.75" fill="#a07858"/><ellipse cx="4.8" cy="37.8" rx="1.01" ry="0.75" fill="#a07858"/><ellipse cx="70.2" cy="36.2" rx="1.01" ry="0.75" fill="#a07858"/></svg></g><rect x="118.70" y="371.20" width="78.60" height="44.80" rx="3.6" fill="#1e2430" stroke="#eaa90f" stroke-width="1.8"/><g clip-path="url(#pc5)"><svg x="120.25" y="372.75" width="75.50" height="41.70" viewBox="0 0 75.5 41.7" preserveAspectRatio="none"><rect width="75.5" height="41.7" fill="#80502f"/>
<path d="M0 0H11.5Q10 2 6 2.5Q2.5 3 1.8 6Q1.5 9 0 10Z" fill="#fcf5ea"/>
<path d="M55 0Q57 2.6 61 3Q68 3 70.5 5Q72.5 7 72.5 11Q73 15 75.5 17.2V0Z" fill="#fcf5ea"/>
<path d="M22.45 10.65h4.95M28.39 10.65h1.98M31.36 10.65h3.96M36.31 10.65h4.95M42.26 10.65h4.95M48.20 10.65h4.95" stroke="#fff" stroke-width="1.15"/>
<path d="M33.75 15.05h10" stroke="#e2cdb4" stroke-width=".6"/>
<path d="M16.75 17.25h3.3M18.34 18.88h3.3M19.93 20.50h3.3M21.52 22.12h3.3M23.11 23.75h3.3M24.70 25.38h3.3M26.29 27.00h3.3M27.88 28.62h3.3M29.47 30.25h3.3" stroke="#5c3a24" stroke-width="0.7"/>
<g stroke="#e8d6bc" stroke-width=".4" fill="none"><path d="M0 23Q4 26 6 32Q7.5 38 10 41.7M0 26Q3 29 4.5 34Q5.5 39 7 41.7M0 30Q2 33 3 37L4 41.7M2 25L5 29M3.5 31L6.5 33M4.5 36L8 38"/></g>
<path d="M0 36Q2 38 2.5 41.7H0Z" fill="#fcf5ea"/>
<path d="M61.5 29.5Q64 27 66.5 29L69 28Q72 29 71 32L73 34Q75 36 73 38L75.5 39V41.7H63Q64 38 62.5 36Q60 33 61.5 29.5Z" fill="#efe0cc"/><circle cx="68.5" cy="33.5" r="1.6" fill="#b89070"/><path d="M64 31.5L66 33M70.5 36L72.5 38M65 38.5H70" stroke="#7a5030" stroke-width=".5"/></svg></g><rect x="118.70" y="423.20" width="78.60" height="44.80" rx="3.6" fill="#1e2430" stroke="#eaa90f" stroke-width="1.8"/><g clip-path="url(#pc6)"><svg x="120.25" y="424.75" width="75.50" height="41.70" viewBox="0 0 75.5 41.7" preserveAspectRatio="none"><rect width="75.5" height="41.7" fill="#fcf5ea"/>
<path d="M0 0H8Q8.8 3 7 5Q4 7 0 6.5Z" fill="#6a3c22"/><path d="M1.5 2.2Q4 1 6.5 2.4" stroke="#e8d6bc" stroke-width=".5" fill="none"/>
<path d="M62 0Q62.5 3.5 66 4.6Q70 5 71.5 7.5Q72 11 73 13Q74.5 15 75.5 14.5V0Z" fill="#6a3c22"/>
<circle cx="2.6" cy="9.6" r=".7" fill="none" stroke="#8a6a50" stroke-width=".35"/><circle cx="68.5" cy="7.6" r=".7" fill="none" stroke="#8a6a50" stroke-width=".35"/>
<path d="M21.75 9.55h5.00M27.75 9.55h2.00M30.75 9.55h4.00M35.75 9.55h5.00M41.75 9.55h5.00M47.75 9.55h5.00" stroke="#4a423c" stroke-width="0.95"/>
<path d="M20.45 14.15h6.9M50.15 14.15h5.6" stroke="#a09890" stroke-width=".55"/>
<path d="M11.75 16.25h3.3M13.50 17.88h3.3M15.25 19.50h3.3M17.00 21.12h3.3M18.75 22.75h3.3M20.50 24.38h3.3M22.25 26.00h3.3M24.00 27.62h3.3M25.75 29.25h3.3" stroke="#9a9088" stroke-width="0.65"/><path d="M41.75 16.25h3.3M43.50 17.88h3.3M45.25 19.50h3.3M47.00 21.12h3.3M48.75 22.75h3.3M50.50 24.38h3.3M52.25 26.00h3.3M54.00 27.62h3.3M55.75 29.25h3.3" stroke="#9a9088" stroke-width="0.65"/>
<ellipse cx="15" cy="20.8" rx="0.94" ry="0.7" fill="#7a5a48"/><ellipse cx="48.5" cy="25.4" rx="0.94" ry="0.7" fill="#7a5a48"/><ellipse cx="65" cy="27.8" rx="0.94" ry="0.7" fill="#7a5a48"/></svg></g><rect x="118.70" y="475.20" width="78.60" height="44.80" rx="3.6" fill="#1e2430" stroke="#eaa90f" stroke-width="1.8"/><g clip-path="url(#pc7)"><svg x="120.25" y="476.75" width="75.50" height="41.70" viewBox="0 0 75.5 41.7" preserveAspectRatio="none"><rect width="75.5" height="41.7" fill="#fcf5ea"/></svg></g><rect x="118.70" y="527.20" width="78.60" height="44.80" rx="3.6" fill="#1e2430" stroke="#eaa90f" stroke-width="1.8"/><g clip-path="url(#pc8)"><svg x="120.25" y="528.75" width="75.50" height="41.70" viewBox="0 0 75.5 41.7" preserveAspectRatio="none"><rect width="75.5" height="41.7" fill="#fcf5ea"/>
<path d="M60 0Q61 3 65 2.6Q69 2 70 5Q70.5 9 73 10.5Q75 11.5 75.5 12.3" stroke="#a89684" stroke-width=".4" fill="none"/>
<path d="M11.55 12.05h3.53M15.79 12.05h1.41M17.91 12.05h2.83M21.44 12.05h3.53M25.68 12.05h3.53M29.92 12.05h3.53" stroke="#4a423c" stroke-width="0.95"/>
<path d="M49.65 9.75h6.1M20.75 16.55h6" stroke="#a09890" stroke-width=".55"/>
<path d="M40.75 11.75h3.3M42.65 13.35h3.3M44.55 14.95h3.3M46.45 16.55h3.3M48.35 18.15h3.3M50.25 19.75h3.3M52.15 21.35h3.3M54.05 22.95h3.3M55.95 24.55h3.3" stroke="#9a9088" stroke-width="0.65"/><path d="M12.75 18.75h3.3M14.65 20.35h3.3M16.55 21.95h3.3M18.45 23.55h3.3M20.35 25.15h3.3M22.25 26.75h3.3M24.15 28.35h3.3M26.05 29.95h3.3M27.95 31.55h3.3" stroke="#9a9088" stroke-width="0.65"/>
<circle cx="63.4" cy="26.5" r="1.3" fill="#b07a4a"/></svg></g><rect x="202.9" y="80.6" width="5" height="474.4" rx="2.5" fill="#d4d6db"/><rect x="208.4" y="58" width="1.6" height="498" fill="#2a2a2a"/></svg>
</div>

<!-- ===== EDITOR ===== -->
<div class="abs dark" style="left:210px;top:58px;width:790px;height:498px"></div>
<div id="editor">
<svg class="ic" style="left:210px;top:58px" width="790" height="498" viewBox="210 58 790 498"><rect x="210" y="58" width="790" height="19.2" fill="#3a3a3a"/><rect x="210" y="77" width="790" height="1.3" fill="#161616"/><rect x="411.6" y="62.6" width="39.8" height="12.8" rx="1.5" fill="#414141"/><path d="M981.6 65.4L987.6 71.4M987.6 65.4L981.6 71.4" stroke="#fff" stroke-width="1.5"/><rect x="210.5" y="78.2" width="789.5" height="8.7" fill="#fff"/><rect x="218.6" y="78.2" width="11.2" height="8.7" fill="#e6e7e9"/><rect x="992.4" y="78.2" width="7.6" height="8.7" fill="#e6e7e9"/><rect x="218.8" y="86.8" width="781.2" height="1.1" fill="#1a1a1a"/><rect x="210.5" y="86.9" width="8.3" height="469.1" fill="#fff"/><rect x="210.5" y="86.9" width="8.3" height="25.5" fill="#ebecee"/><rect x="210.5" y="541.6" width="8.3" height="14.4" fill="#e6e7e9"/><rect x="218.8" y="86.8" width="1.1" height="469.2" fill="#1a1a1a"/><rect x="235.4" y="82" width="0.8" height="0.9" fill="#b4b4b4"/><rect x="242.5" y="82" width="0.8" height="0.9" fill="#b4b4b4"/><rect x="249.7" y="82" width="0.8" height="0.9" fill="#b4b4b4"/><rect x="256.9" y="80.6" width="0.7" height="3.8" fill="#a8a8a8"/><rect x="264.0" y="82" width="0.8" height="0.9" fill="#b4b4b4"/><rect x="271.2" y="82" width="0.8" height="0.9" fill="#b4b4b4"/><rect x="278.3" y="82" width="0.8" height="0.9" fill="#b4b4b4"/><text x="285.9" y="84.7" font-size="5.3" fill="#4a4a4a" text-anchor="middle" font-family="Liberation Sans">1</text><rect x="292.7" y="82" width="0.8" height="0.9" fill="#b4b4b4"/><rect x="299.8" y="82" width="0.8" height="0.9" fill="#b4b4b4"/><rect x="307.0" y="82" width="0.8" height="0.9" fill="#b4b4b4"/><rect x="314.2" y="80.6" width="0.7" height="3.8" fill="#a8a8a8"/><rect x="321.3" y="82" width="0.8" height="0.9" fill="#b4b4b4"/><rect x="328.5" y="82" width="0.8" height="0.9" fill="#b4b4b4"/><rect x="335.6" y="82" width="0.8" height="0.9" fill="#b4b4b4"/><text x="343.2" y="84.7" font-size="5.3" fill="#4a4a4a" text-anchor="middle" font-family="Liberation Sans">2</text><rect x="350.0" y="82" width="0.8" height="0.9" fill="#b4b4b4"/><rect x="357.1" y="82" width="0.8" height="0.9" fill="#b4b4b4"/><rect x="364.3" y="82" width="0.8" height="0.9" fill="#b4b4b4"/><rect x="371.5" y="80.6" width="0.7" height="3.8" fill="#a8a8a8"/><rect x="378.6" y="82" width="0.8" height="0.9" fill="#b4b4b4"/><rect x="385.8" y="82" width="0.8" height="0.9" fill="#b4b4b4"/><rect x="392.9" y="82" width="0.8" height="0.9" fill="#b4b4b4"/><text x="400.5" y="84.7" font-size="5.3" fill="#4a4a4a" text-anchor="middle" font-family="Liberation Sans">3</text><rect x="407.3" y="82" width="0.8" height="0.9" fill="#b4b4b4"/><rect x="414.4" y="82" width="0.8" height="0.9" fill="#b4b4b4"/><rect x="421.6" y="82" width="0.8" height="0.9" fill="#b4b4b4"/><rect x="428.8" y="80.6" width="0.7" height="3.8" fill="#a8a8a8"/><rect x="435.9" y="82" width="0.8" height="0.9" fill="#b4b4b4"/><rect x="443.1" y="82" width="0.8" height="0.9" fill="#b4b4b4"/><rect x="450.2" y="82" width="0.8" height="0.9" fill="#b4b4b4"/><text x="457.8" y="84.7" font-size="5.3" fill="#4a4a4a" text-anchor="middle" font-family="Liberation Sans">4</text><rect x="464.6" y="82" width="0.8" height="0.9" fill="#b4b4b4"/><rect x="471.7" y="82" width="0.8" height="0.9" fill="#b4b4b4"/><rect x="478.9" y="82" width="0.8" height="0.9" fill="#b4b4b4"/><rect x="486.1" y="80.6" width="0.7" height="3.8" fill="#a8a8a8"/><rect x="493.2" y="82" width="0.8" height="0.9" fill="#b4b4b4"/><rect x="500.4" y="82" width="0.8" height="0.9" fill="#b4b4b4"/><rect x="507.5" y="82" width="0.8" height="0.9" fill="#b4b4b4"/><text x="515.1" y="84.7" font-size="5.3" fill="#4a4a4a" text-anchor="middle" font-family="Liberation Sans">5</text><rect x="521.9" y="82" width="0.8" height="0.9" fill="#b4b4b4"/><rect x="529.0" y="82" width="0.8" height="0.9" fill="#b4b4b4"/><rect x="536.2" y="82" width="0.8" height="0.9" fill="#b4b4b4"/><rect x="543.4" y="80.6" width="0.7" height="3.8" fill="#a8a8a8"/><rect x="550.5" y="82" width="0.8" height="0.9" fill="#b4b4b4"/><rect x="557.7" y="82" width="0.8" height="0.9" fill="#b4b4b4"/><rect x="564.8" y="82" width="0.8" height="0.9" fill="#b4b4b4"/><text x="572.4" y="84.7" font-size="5.3" fill="#4a4a4a" text-anchor="middle" font-family="Liberation Sans">6</text><rect x="579.2" y="82" width="0.8" height="0.9" fill="#b4b4b4"/><rect x="586.3" y="82" width="0.8" height="0.9" fill="#b4b4b4"/><rect x="593.5" y="82" width="0.8" height="0.9" fill="#b4b4b4"/><rect x="600.7" y="80.6" width="0.7" height="3.8" fill="#a8a8a8"/><rect x="607.8" y="82" width="0.8" height="0.9" fill="#b4b4b4"/><rect x="615.0" y="82" width="0.8" height="0.9" fill="#b4b4b4"/><rect x="622.1" y="82" width="0.8" height="0.9" fill="#b4b4b4"/><text x="629.7" y="84.7" font-size="5.3" fill="#4a4a4a" text-anchor="middle" font-family="Liberation Sans">7</text><rect x="636.5" y="82" width="0.8" height="0.9" fill="#b4b4b4"/><rect x="643.6" y="82" width="0.8" height="0.9" fill="#b4b4b4"/><rect x="650.8" y="82" width="0.8" height="0.9" fill="#b4b4b4"/><rect x="658.0" y="80.6" width="0.7" height="3.8" fill="#a8a8a8"/><rect x="665.1" y="82" width="0.8" height="0.9" fill="#b4b4b4"/><rect x="672.3" y="82" width="0.8" height="0.9" fill="#b4b4b4"/><rect x="679.4" y="82" width="0.8" height="0.9" fill="#b4b4b4"/><text x="687.0" y="84.7" font-size="5.3" fill="#4a4a4a" text-anchor="middle" font-family="Liberation Sans">8</text><rect x="693.8" y="82" width="0.8" height="0.9" fill="#b4b4b4"/><rect x="700.9" y="82" width="0.8" height="0.9" fill="#b4b4b4"/><rect x="708.1" y="82" width="0.8" height="0.9" fill="#b4b4b4"/><rect x="715.3" y="80.6" width="0.7" height="3.8" fill="#a8a8a8"/><rect x="722.4" y="82" width="0.8" height="0.9" fill="#b4b4b4"/><rect x="729.6" y="82" width="0.8" height="0.9" fill="#b4b4b4"/><rect x="736.7" y="82" width="0.8" height="0.9" fill="#b4b4b4"/><text x="744.3" y="84.7" font-size="5.3" fill="#4a4a4a" text-anchor="middle" font-family="Liberation Sans">9</text><rect x="751.1" y="82" width="0.8" height="0.9" fill="#b4b4b4"/><rect x="758.2" y="82" width="0.8" height="0.9" fill="#b4b4b4"/><rect x="765.4" y="82" width="0.8" height="0.9" fill="#b4b4b4"/><rect x="772.6" y="80.6" width="0.7" height="3.8" fill="#a8a8a8"/><rect x="779.7" y="82" width="0.8" height="0.9" fill="#b4b4b4"/><rect x="786.9" y="82" width="0.8" height="0.9" fill="#b4b4b4"/><rect x="794.0" y="82" width="0.8" height="0.9" fill="#b4b4b4"/><text x="801.6" y="84.7" font-size="5.3" fill="#4a4a4a" text-anchor="middle" font-family="Liberation Sans">10</text><rect x="808.4" y="82" width="0.8" height="0.9" fill="#b4b4b4"/><rect x="815.5" y="82" width="0.8" height="0.9" fill="#b4b4b4"/><rect x="822.7" y="82" width="0.8" height="0.9" fill="#b4b4b4"/><rect x="829.9" y="80.6" width="0.7" height="3.8" fill="#a8a8a8"/><rect x="837.0" y="82" width="0.8" height="0.9" fill="#b4b4b4"/><rect x="844.2" y="82" width="0.8" height="0.9" fill="#b4b4b4"/><rect x="851.3" y="82" width="0.8" height="0.9" fill="#b4b4b4"/><text x="858.9" y="84.7" font-size="5.3" fill="#4a4a4a" text-anchor="middle" font-family="Liberation Sans">11</text><rect x="865.7" y="82" width="0.8" height="0.9" fill="#b4b4b4"/><rect x="872.8" y="82" width="0.8" height="0.9" fill="#b4b4b4"/><rect x="880.0" y="82" width="0.8" height="0.9" fill="#b4b4b4"/><rect x="887.2" y="80.6" width="0.7" height="3.8" fill="#a8a8a8"/><rect x="894.3" y="82" width="0.8" height="0.9" fill="#b4b4b4"/><rect x="901.5" y="82" width="0.8" height="0.9" fill="#b4b4b4"/><rect x="908.6" y="82" width="0.8" height="0.9" fill="#b4b4b4"/><text x="916.2" y="84.7" font-size="5.3" fill="#4a4a4a" text-anchor="middle" font-family="Liberation Sans">12</text><rect x="923.0" y="82" width="0.8" height="0.9" fill="#b4b4b4"/><rect x="930.1" y="82" width="0.8" height="0.9" fill="#b4b4b4"/><rect x="937.3" y="82" width="0.8" height="0.9" fill="#b4b4b4"/><rect x="944.5" y="80.6" width="0.7" height="3.8" fill="#a8a8a8"/><rect x="951.6" y="82" width="0.8" height="0.9" fill="#b4b4b4"/><rect x="958.8" y="82" width="0.8" height="0.9" fill="#b4b4b4"/><rect x="965.9" y="82" width="0.8" height="0.9" fill="#b4b4b4"/><text x="973.5" y="84.7" font-size="5.3" fill="#4a4a4a" text-anchor="middle" font-family="Liberation Sans">13</text><rect x="980.3" y="82" width="0.8" height="0.9" fill="#b4b4b4"/><rect x="987.4" y="82" width="0.8" height="0.9" fill="#b4b4b4"/><rect x="994.6" y="82" width="0.8" height="0.9" fill="#b4b4b4"/><rect x="214.2" y="90.3" width="0.9" height="0.8" fill="#b4b4b4"/><rect x="214.2" y="97.5" width="0.9" height="0.8" fill="#b4b4b4"/><rect x="214.2" y="104.6" width="0.9" height="0.8" fill="#b4b4b4"/><rect x="214.2" y="119.0" width="0.9" height="0.8" fill="#b4b4b4"/><rect x="214.2" y="126.1" width="0.9" height="0.8" fill="#b4b4b4"/><rect x="214.2" y="133.3" width="0.9" height="0.8" fill="#b4b4b4"/><rect x="212.8" y="140.5" width="3.8" height="0.7" fill="#a8a8a8"/><rect x="214.2" y="147.6" width="0.9" height="0.8" fill="#b4b4b4"/><rect x="214.2" y="154.8" width="0.9" height="0.8" fill="#b4b4b4"/><rect x="214.2" y="161.9" width="0.9" height="0.8" fill="#b4b4b4"/><text transform="translate(216.6 169.5) rotate(-90)" font-size="5.3" fill="#4a4a4a" text-anchor="middle" font-family="Liberation Sans">1</text><rect x="214.2" y="176.3" width="0.9" height="0.8" fill="#b4b4b4"/><rect x="214.2" y="183.4" width="0.9" height="0.8" fill="#b4b4b4"/><rect x="214.2" y="190.6" width="0.9" height="0.8" fill="#b4b4b4"/><rect x="212.8" y="197.8" width="3.8" height="0.7" fill="#a8a8a8"/><rect x="214.2" y="204.9" width="0.9" height="0.8" fill="#b4b4b4"/><rect x="214.2" y="212.1" width="0.9" height="0.8" fill="#b4b4b4"/><rect x="214.2" y="219.2" width="0.9" height="0.8" fill="#b4b4b4"/><text transform="translate(216.6 226.8) rotate(-90)" font-size="5.3" fill="#4a4a4a" text-anchor="middle" font-family="Liberation Sans">2</text><rect x="214.2" y="233.6" width="0.9" height="0.8" fill="#b4b4b4"/><rect x="214.2" y="240.7" width="0.9" height="0.8" fill="#b4b4b4"/><rect x="214.2" y="247.9" width="0.9" height="0.8" fill="#b4b4b4"/><rect x="212.8" y="255.1" width="3.8" height="0.7" fill="#a8a8a8"/><rect x="214.2" y="262.2" width="0.9" height="0.8" fill="#b4b4b4"/><rect x="214.2" y="269.4" width="0.9" height="0.8" fill="#b4b4b4"/><rect x="214.2" y="276.5" width="0.9" height="0.8" fill="#b4b4b4"/><text transform="translate(216.6 284.1) rotate(-90)" font-size="5.3" fill="#4a4a4a" text-anchor="middle" font-family="Liberation Sans">3</text><rect x="214.2" y="290.9" width="0.9" height="0.8" fill="#b4b4b4"/><rect x="214.2" y="298.0" width="0.9" height="0.8" fill="#b4b4b4"/><rect x="214.2" y="305.2" width="0.9" height="0.8" fill="#b4b4b4"/><rect x="212.8" y="312.4" width="3.8" height="0.7" fill="#a8a8a8"/><rect x="214.2" y="319.5" width="0.9" height="0.8" fill="#b4b4b4"/><rect x="214.2" y="326.7" width="0.9" height="0.8" fill="#b4b4b4"/><rect x="214.2" y="333.8" width="0.9" height="0.8" fill="#b4b4b4"/><text transform="translate(216.6 341.4) rotate(-90)" font-size="5.3" fill="#4a4a4a" text-anchor="middle" font-family="Liberation Sans">4</text><rect x="214.2" y="348.2" width="0.9" height="0.8" fill="#b4b4b4"/><rect x="214.2" y="355.3" width="0.9" height="0.8" fill="#b4b4b4"/><rect x="214.2" y="362.5" width="0.9" height="0.8" fill="#b4b4b4"/><rect x="212.8" y="369.7" width="3.8" height="0.7" fill="#a8a8a8"/><rect x="214.2" y="376.8" width="0.9" height="0.8" fill="#b4b4b4"/><rect x="214.2" y="384.0" width="0.9" height="0.8" fill="#b4b4b4"/><rect x="214.2" y="391.1" width="0.9" height="0.8" fill="#b4b4b4"/><text transform="translate(216.6 398.7) rotate(-90)" font-size="5.3" fill="#4a4a4a" text-anchor="middle" font-family="Liberation Sans">5</text><rect x="214.2" y="405.5" width="0.9" height="0.8" fill="#b4b4b4"/><rect x="214.2" y="412.6" width="0.9" height="0.8" fill="#b4b4b4"/><rect x="214.2" y="419.8" width="0.9" height="0.8" fill="#b4b4b4"/><rect x="212.8" y="427.0" width="3.8" height="0.7" fill="#a8a8a8"/><rect x="214.2" y="434.1" width="0.9" height="0.8" fill="#b4b4b4"/><rect x="214.2" y="441.3" width="0.9" height="0.8" fill="#b4b4b4"/><rect x="214.2" y="448.4" width="0.9" height="0.8" fill="#b4b4b4"/><text transform="translate(216.6 456.0) rotate(-90)" font-size="5.3" fill="#4a4a4a" text-anchor="middle" font-family="Liberation Sans">6</text><rect x="214.2" y="462.8" width="0.9" height="0.8" fill="#b4b4b4"/><rect x="214.2" y="469.9" width="0.9" height="0.8" fill="#b4b4b4"/><rect x="214.2" y="477.1" width="0.9" height="0.8" fill="#b4b4b4"/><rect x="212.8" y="484.3" width="3.8" height="0.7" fill="#a8a8a8"/><rect x="214.2" y="491.4" width="0.9" height="0.8" fill="#b4b4b4"/><rect x="214.2" y="498.6" width="0.9" height="0.8" fill="#b4b4b4"/><rect x="214.2" y="505.7" width="0.9" height="0.8" fill="#b4b4b4"/><text transform="translate(216.6 513.3) rotate(-90)" font-size="5.3" fill="#4a4a4a" text-anchor="middle" font-family="Liberation Sans">7</text><rect x="214.2" y="520.1" width="0.9" height="0.8" fill="#b4b4b4"/><rect x="214.2" y="527.2" width="0.9" height="0.8" fill="#b4b4b4"/><rect x="214.2" y="534.4" width="0.9" height="0.8" fill="#b4b4b4"/><rect x="212.8" y="541.6" width="3.8" height="0.7" fill="#a8a8a8"/><rect x="214.2" y="548.7" width="0.9" height="0.8" fill="#b4b4b4"/></svg>
<div class="t" id="edt" style="left:219px;top:64.9px;font-size:7.9px;font-weight:bold;color:#fff;letter-spacing:-0.2px">Editing: int-coffee-theme - Theme</div>
<div class="t" id="used" style="left:341px;top:65.2px;font-size:7.45px;color:#b0b0b0">(Used by all slides)</div>
<div class="t" id="ren" style="left:416.6px;top:65.7px;font-size:8.2px;color:#fff">Rename</div>
<svg class="ic" style="left:220px;top:88px" width="780" height="468" viewBox="220 88 780 468"><rect x="219.9" y="87.9" width="781" height="469" fill="#3c3c3c"/><rect x="227.2" y="110.8" width="765.8" height="432.8" fill="#1e1e1e"/><rect x="228.2" y="111.8" width="763.8" height="430.5" fill="#fcf5ea"/><circle cx="298.7" cy="238.49" r="2.12" fill="#1c1c1c"/><circle cx="317.9" cy="258.67" r="1.83" fill="#1c1c1c"/><circle cx="337.9" cy="275.57" r="1.48" fill="#1c1c1c"/><circle cx="356.7" cy="290.82" r="1.38" fill="#1c1c1c"/><circle cx="375.9" cy="305.59" r="1.38" fill="#1c1c1c"/><circle cx="395.09999999999997" cy="320.20" r="1.38" fill="#1c1c1c"/><circle cx="413.9" cy="334.92" r="1.38" fill="#1c1c1c"/><circle cx="433.09999999999997" cy="349.40" r="1.38" fill="#1c1c1c"/><circle cx="452.3" cy="363.67" r="1.38" fill="#1c1c1c"/><rect x="281.2" y="227" width="657.8" height="271.7" fill="none" stroke="#7fa8f2" stroke-width="1.5"/><path d="M610.4 215V226" stroke="#7fa8f2" stroke-width="1"/><circle cx="610.4" cy="213.1" r="2.5" fill="#fcf5ea"/><circle cx="610.4" cy="213.1" r="1.9" fill="#1f62e0"/><rect x="278.9" y="224.7" width="4.6" height="4.6" fill="#fcf5ea"/><rect x="279.4" y="225.2" width="3.6" height="3.6" fill="#1f62e0"/><rect x="608.1" y="224.7" width="4.6" height="4.6" fill="#fcf5ea"/><rect x="608.6" y="225.2" width="3.6" height="3.6" fill="#1f62e0"/><rect x="936.7" y="224.7" width="4.6" height="4.6" fill="#fcf5ea"/><rect x="937.2" y="225.2" width="3.6" height="3.6" fill="#1f62e0"/><rect x="278.9" y="360.5" width="4.6" height="4.6" fill="#fcf5ea"/><rect x="279.4" y="361.0" width="3.6" height="3.6" fill="#1f62e0"/><rect x="936.7" y="360.5" width="4.6" height="4.6" fill="#fcf5ea"/><rect x="937.2" y="361.0" width="3.6" height="3.6" fill="#1f62e0"/><rect x="278.9" y="496.4" width="4.6" height="4.6" fill="#fcf5ea"/><rect x="279.4" y="496.9" width="3.6" height="3.6" fill="#1f62e0"/><rect x="608.1" y="496.4" width="4.6" height="4.6" fill="#fcf5ea"/><rect x="608.6" y="496.9" width="3.6" height="3.6" fill="#1f62e0"/><rect x="936.7" y="496.4" width="4.6" height="4.6" fill="#fcf5ea"/><rect x="937.2" y="496.9" width="3.6" height="3.6" fill="#1f62e0"/></svg>
<div class="t" id="stitle" style="left:288px;top:166px;font-size:24.4px;color:#151515">Click to edit theme title style</div>
<div class="t lv" style="left:307.2px;top:231.56px;font-size:14.7px;color:#222">First level</div>
<div class="t lv" style="left:325.2px;top:252.73px;font-size:12.6px;color:#222">Second level</div>
<div class="t lv" style="left:344.8px;top:270.50px;font-size:10.75px;color:#222">Third level</div>
<div class="t lv" style="left:363.6px;top:286.20px;font-size:9.8px;color:#222">Fourth level</div>
<div class="t lv" style="left:382.4px;top:300.92px;font-size:9.9px;color:#222">Fifth level</div>
<div class="t lv" style="left:401.6px;top:315.67px;font-size:9.6px;color:#222">Sixth level</div>
<div class="t lv" style="left:420.8px;top:330.42px;font-size:9.55px;color:#222">Seventh level</div>
<div class="t lv" style="left:439.6px;top:344.87px;font-size:9.6px;color:#222">Eighth level</div>
<div class="t lv" style="left:458.8px;top:358.98px;font-size:9.95px;color:#222">Ninth level</div>
<div class="t" id="f1" style="left:286.6px;top:520.6px;font-size:6.7px;color:#a9a49c">Unsupported placeholder</div>
<div class="t" id="f2" style="left:573px;top:520.6px;font-size:6.7px;color:#a9a49c">Unsupported placeholder</div>
<div class="t" style="left:929.6px;top:518.8px;font-size:6px;color:#7a756e">#</div>
</div>

<!-- ===== POPUP ===== -->
<div id="popup">
<div class="abs" style="left:641.2px;top:53.6px;width:148.2px;height:120.2px;background:#fff;border-radius:2.5px;box-shadow:0 1px 3.5px rgba(0,0,0,.22),0 0 1px rgba(0,0,0,.18)"></div>
<svg class="ic" style="left:641px;top:53px" width="150" height="122" viewBox="641 53 150 122"><rect x="648.6" y="63.9" width="41.8" height="48" fill="#fff" rx="0" stroke="#e6e6e6" stroke-width="0.8"/><rect x="660.7" y="69.60" width="25.0" height="1.4" fill="#c8c8c8"/><circle cx="654.4" cy="70.3" r="1.9" fill="#111"/><rect x="668.4" y="79.00" width="17.3" height="1.4" fill="#c8c8c8"/><circle cx="662.3" cy="79.7" r="2.0" fill="#fff" stroke="#777" stroke-width=".6"/><rect x="668.4" y="87.40" width="17.3" height="1.4" fill="#c8c8c8"/><circle cx="662.3" cy="88.1" r="2.0" fill="#fff" stroke="#777" stroke-width=".6"/><rect x="676.4" y="96.00" width="9.3" height="1.4" fill="#c8c8c8"/><rect x="668.9" y="95.10000000000001" width="3.2" height="3.2" fill="#111"/><rect x="660.7" y="104.90" width="25.0" height="1.4" fill="#c8c8c8"/><circle cx="654.4" cy="105.6" r="1.9" fill="#111"/><rect x="694.7" y="63.9" width="41.8" height="48" fill="#fff" rx="0" stroke="#e6e6e6" stroke-width="0.8"/><rect x="706.8" y="69.60" width="25.0" height="1.4" fill="#c8c8c8"/><path d="M700.5 67.7L701.3 69.5L703.1 70.3L701.3 71.1L700.5 72.89999999999999L699.7 71.1L697.9 70.3L699.7 69.5Z" fill="#222"/><circle cx="700.5" cy="70.3" r=".75" fill="#fff"/><rect x="714.5" y="79.00" width="17.3" height="1.4" fill="#c8c8c8"/><path d="M706.1 78.0L711.0 79.7L706.1 81.4L707.4 79.7Z" fill="#fff" stroke="#333" stroke-width=".55" stroke-linejoin="miter"/><path d="M707.4 79.7H710.6999999999999" stroke="#333" stroke-width=".4"/><rect x="714.5" y="87.40" width="17.3" height="1.4" fill="#c8c8c8"/><path d="M706.1 86.39999999999999L711.0 88.1L706.1 89.8L707.4 88.1Z" fill="#fff" stroke="#333" stroke-width=".55" stroke-linejoin="miter"/><path d="M707.4 88.1H710.6999999999999" stroke="#333" stroke-width=".4"/><rect x="722.5" y="96.00" width="9.3" height="1.4" fill="#c8c8c8"/><rect x="715.0" y="95.10000000000001" width="3.2" height="3.2" fill="#111"/><rect x="706.8" y="104.90" width="25.0" height="1.4" fill="#c8c8c8"/><path d="M700.5 103.0L701.3 104.8L703.1 105.6L701.3 106.39999999999999L700.5 108.19999999999999L699.7 106.39999999999999L697.9 105.6L699.7 104.8Z" fill="#222"/><circle cx="700.5" cy="105.6" r=".75" fill="#fff"/><rect x="740.8" y="63.9" width="41.8" height="48" fill="#fff" rx="1" stroke="#a4a4a4" stroke-width="1"/><rect x="752.9" y="69.60" width="25.0" height="1.4" fill="#c8c8c8"/><rect x="745.6" y="69.3" width="3.0" height="3.0" rx=".3" fill="#222"/><rect x="744.85" y="68.55" width="2.9" height="2.9" rx=".3" fill="#fff" stroke="#333" stroke-width=".55"/><rect x="760.6" y="79.00" width="17.3" height="1.4" fill="#c8c8c8"/><rect x="753.5" y="78.7" width="3.0" height="3.0" rx=".3" fill="#222"/><rect x="752.75" y="77.95" width="2.9" height="2.9" rx=".3" fill="#fff" stroke="#333" stroke-width=".55"/><rect x="760.6" y="87.40" width="17.3" height="1.4" fill="#c8c8c8"/><rect x="753.5" y="87.1" width="3.0" height="3.0" rx=".3" fill="#222"/><rect x="752.75" y="86.35" width="2.9" height="2.9" rx=".3" fill="#fff" stroke="#333" stroke-width=".55"/><rect x="768.6" y="96.00" width="9.3" height="1.4" fill="#c8c8c8"/><rect x="761.7" y="95.7" width="3.0" height="3.0" rx=".3" fill="#222"/><rect x="760.95" y="94.95" width="2.9" height="2.9" rx=".3" fill="#fff" stroke="#333" stroke-width=".55"/><rect x="752.9" y="104.90" width="25.0" height="1.4" fill="#c8c8c8"/><rect x="745.6" y="104.6" width="3.0" height="3.0" rx=".3" fill="#222"/><rect x="744.85" y="103.85" width="2.9" height="2.9" rx=".3" fill="#fff" stroke="#333" stroke-width=".55"/><rect x="648.6" y="115.9" width="41.8" height="48" fill="#fff" rx="0" stroke="#e6e6e6" stroke-width="0.8"/><rect x="660.7" y="121.60" width="25.0" height="1.4" fill="#c8c8c8"/><path d="M651.6 122.3H656.4" stroke="#111" stroke-width=".9"/><path d="M654.6999999999999 120.2L657.1 122.3L654.6999999999999 124.39999999999999" fill="none" stroke="#111" stroke-width=".9"/><rect x="668.4" y="131.00" width="17.3" height="1.4" fill="#c8c8c8"/><path d="M662.3 129.29999999999998L664.6999999999999 131.7L662.3 134.1L659.9 131.7Z" fill="#111"/><circle cx="662.3" cy="131.7" r=".5" fill="#fff"/><rect x="668.4" y="139.40" width="17.3" height="1.4" fill="#c8c8c8"/><path d="M662.3 137.7L664.6999999999999 140.1L662.3 142.5L659.9 140.1Z" fill="#111"/><circle cx="662.3" cy="140.1" r=".5" fill="#fff"/><rect x="676.4" y="148.00" width="9.3" height="1.4" fill="#c8c8c8"/><circle cx="670.5" cy="148.7" r="1.9" fill="#111"/><rect x="660.7" y="156.90" width="25.0" height="1.4" fill="#c8c8c8"/><path d="M651.6 157.6H656.4" stroke="#111" stroke-width=".9"/><path d="M654.6999999999999 155.5L657.1 157.6L654.6999999999999 159.7" fill="none" stroke="#111" stroke-width=".9"/><rect x="694.7" y="115.9" width="41.8" height="48" fill="#fff" rx="0" stroke="#e6e6e6" stroke-width="0.8"/><rect x="706.8" y="121.60" width="25.0" height="1.4" fill="#c8c8c8"/><path d="M700.50 120.10L701.09 121.69L702.78 121.76L701.45 122.81L701.91 124.44L700.50 123.50L699.09 124.44L699.55 122.81L698.22 121.76L699.91 121.69Z" fill="#111"/><rect x="714.5" y="131.00" width="17.3" height="1.4" fill="#c8c8c8"/><circle cx="708.4" cy="131.7" r="2.0" fill="#fff" stroke="#777" stroke-width=".6"/><rect x="714.5" y="139.40" width="17.3" height="1.4" fill="#c8c8c8"/><circle cx="708.4" cy="140.1" r="2.0" fill="#fff" stroke="#777" stroke-width=".6"/><rect x="722.5" y="148.00" width="9.3" height="1.4" fill="#c8c8c8"/><rect x="715.0" y="147.1" width="3.2" height="3.2" fill="#111"/><rect x="706.8" y="156.90" width="25.0" height="1.4" fill="#c8c8c8"/><path d="M700.50 155.40L701.09 156.99L702.78 157.06L701.45 158.11L701.91 159.74L700.50 158.80L699.09 159.74L699.55 158.11L698.22 157.06L699.91 156.99Z" fill="#111"/><rect x="740.8" y="115.9" width="41.8" height="48" fill="#fff" rx="0" stroke="#e6e6e6" stroke-width="0.8"/><rect x="752.9" y="121.60" width="25.0" height="1.4" fill="#c8c8c8"/><path d="M744.3000000000001 120.6L749.2 122.3L744.3000000000001 124.0L745.6 122.3Z" fill="#fff" stroke="#333" stroke-width=".55" stroke-linejoin="miter"/><path d="M745.6 122.3H748.9" stroke="#333" stroke-width=".4"/><rect x="760.6" y="131.00" width="17.3" height="1.4" fill="#c8c8c8"/><circle cx="754.5" cy="131.7" r="2.0" fill="#fff" stroke="#777" stroke-width=".6"/><rect x="760.6" y="139.40" width="17.3" height="1.4" fill="#c8c8c8"/><circle cx="754.5" cy="140.1" r="2.0" fill="#fff" stroke="#777" stroke-width=".6"/><rect x="768.6" y="148.00" width="9.3" height="1.4" fill="#c8c8c8"/><rect x="761.1" y="147.1" width="3.2" height="3.2" fill="#111"/><rect x="752.9" y="156.90" width="25.0" height="1.4" fill="#c8c8c8"/><path d="M744.3000000000001 155.9L749.2 157.6L744.3000000000001 159.29999999999998L745.6 157.6Z" fill="#fff" stroke="#333" stroke-width=".55" stroke-linejoin="miter"/><path d="M745.6 157.6H748.9" stroke="#333" stroke-width=".4"/></svg>
</div>

</div></body></html>
